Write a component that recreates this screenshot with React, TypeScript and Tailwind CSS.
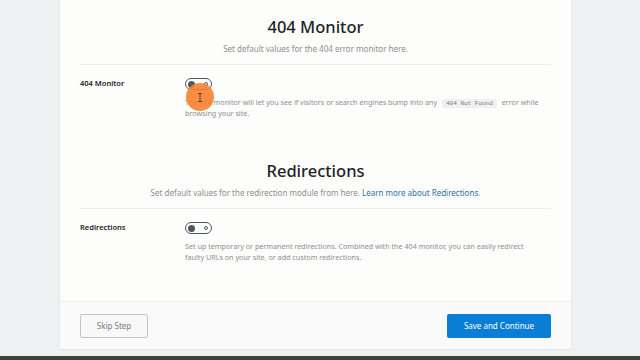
const Toggle = () => (
  <span className="relative flex h-[12px] w-[27px] items-center justify-between rounded-full border border-[#50575e] px-[2px]">
    <span className="h-[7px] w-[7px] rounded-full bg-[#50575e]" />
    <span className="mr-[1px] h-[4px] w-[4px] rounded-full border border-[#50575e]" />
  </span>
);

const Section = ({
  title,
  subtitle,
  label,
  children,
  top,
}: {
  title: string;
  subtitle: React.ReactNode;
  label: string;
  children: React.ReactNode;
  top: string;
}) => (
  <div className={top}>
    <h2 className="text-center text-[16.5px] font-medium leading-[24px] text-[#1d2327]">{title}</h2>
    <p className="mt-[4px] text-center text-[8px] leading-[12px] text-[#8c8f94]">{subtitle}</p>
    <div className="mt-[9px] border-t border-[#ececec]" />
    <div className="mt-[13px] flex">
      <div className="w-[105px] shrink-0 text-[7.5px] font-semibold leading-[11px] text-[#1d2327]">{label}</div>
      <div className="flex-1">
        <Toggle />
        <div className="mt-[7px] pr-[10px] text-[7.2px] leading-[11px] text-[#8c8f94]">{children}</div>
      </div>
    </div>
  </div>
);

export default function App() {
  return (
    <div
      className="flex h-[360px] w-[640px] flex-col overflow-hidden bg-[#eff0f1]"
      style={{ fontFamily: '"Noto Sans", "Open Sans", sans-serif' }}
    >
      <div className="ml-[60px] flex h-[349px] w-[511px] shrink-0 flex-col bg-[#fdfdfb] shadow-[0_1px_2px_rgba(0,0,0,0.06)]">
        <div className="relative flex-1 px-[20px]">
          <Section
            top="pt-[15px]"
            title="404 Monitor"
            subtitle="Set default values for the 404 error monitor here."
            label="404 Monitor"
          >
            <span>The 404 monitor will let you see if visitors or search engines bump into any </span>
            <code className="mx-[3px] inline-block rounded-[2px] bg-[#f0f0f1] px-[4px] align-middle font-mono text-[6px] leading-[9px] text-[#787c82]">
              404 Not Found
            </code>
            <span> error while browsing your site.</span>
          </Section>
          <Section
            top="pt-[40px]"
            title="Redirections"
            subtitle={
              <>
                Set default values for the redirection module from here.{" "}
                <span className="text-[#2f6f9f]">Learn more about Redirections</span>.
              </>
            }
            label="Redirections"
          >
            Set up temporary or permanent redirections. Combined with the 404 monitor, you can easily redirect
            faulty URLs on your site, or add custom redirections.
          </Section>
          {/* click indicator */}
          <div className="absolute left-[126px] top-[83px] flex h-[28px] w-[28px] items-center justify-center rounded-full bg-[#f7822f]/90">
            <svg width="6" height="9" viewBox="0 0 6 9" fill="none" stroke="#5a3a20" strokeWidth="0.9">
              <path d="M1 0.5h4M1 8.5h4M3 0.5v8" />
            </svg>
          </div>
        </div>
        <div className="flex items-center justify-between border-t border-[#eeeeee] bg-[#fafafa] px-[20px] pb-[11px] pt-[12px]">
          <button className="h-[24px] w-[68px] rounded-[2px] border border-[#c3c4c7] bg-[#f8f8f9] text-[8px] text-[#787c82]">
            Skip Step
          </button>
          <button className="h-[24px] w-[104px] rounded-[2px] bg-[#0a7dd6] text-[8px] text-white">
            Save and Continue
          </button>
        </div>
      </div>
      <div className="mt-auto h-[4px] bg-[#3d4338]" />
    </div>
  );
}
